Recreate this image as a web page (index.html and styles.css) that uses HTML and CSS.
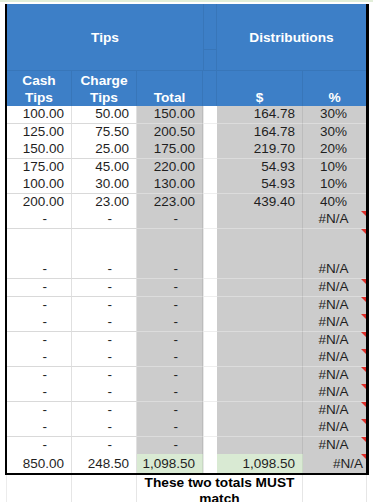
FILE: index.html
```html
<!DOCTYPE html>
<html>
<head>
<meta charset="utf-8">
<link rel="stylesheet" href="styles.css">
</head>
<body>
<div class="topstrip"></div>
<div class="frame">
  <div class="head">
    <div class="h-tips">Tips</div>
    <div class="h-gap1"></div>
    <div class="h-gap2"></div>
    <div class="h-dist">Distributions</div>
    <div class="sub sub-a">Cash<br>Tips</div>
    <div class="sub">Charge<br>Tips</div>
    <div class="sub">Total</div>
    <div class="sub sub-gap"></div>
    <div class="sub">$</div>
    <div class="sub sub-last">%</div>
  </div>

  <div class="row"><div class="c w">100.00</div><div class="c w">50.00</div><div class="c g">150.00</div><div class="c gap"></div><div class="c g">164.78</div><div class="c g pct">30%</div></div>
  <div class="row"><div class="c w">125.00</div><div class="c w">75.50</div><div class="c g">200.50</div><div class="c gap"></div><div class="c g">164.78</div><div class="c g pct">30%</div></div>
  <div class="row"><div class="c w">150.00</div><div class="c w">25.00</div><div class="c g">175.00</div><div class="c gap"></div><div class="c g">219.70</div><div class="c g pct">20%</div></div>
  <div class="row"><div class="c w">175.00</div><div class="c w">45.00</div><div class="c g">220.00</div><div class="c gap"></div><div class="c g">54.93</div><div class="c g pct">10%</div></div>
  <div class="row"><div class="c w">100.00</div><div class="c w">30.00</div><div class="c g">130.00</div><div class="c gap"></div><div class="c g">54.93</div><div class="c g pct">10%</div></div>
  <div class="row"><div class="c w">200.00</div><div class="c w">23.00</div><div class="c g">223.00</div><div class="c gap"></div><div class="c g">439.40</div><div class="c g pct">40%</div></div>
  <div class="row"><div class="c w dash">-</div><div class="c w dash">-</div><div class="c g dash">-</div><div class="c gap"></div><div class="c g"></div><div class="c g pct err">#N/A</div></div>
  <div class="row tall"><div class="c w dash">-</div><div class="c w dash">-</div><div class="c g dash">-</div><div class="c gap"></div><div class="c g"></div><div class="c g pct err">#N/A</div></div>
  <div class="row"><div class="c w dash">-</div><div class="c w dash">-</div><div class="c g dash">-</div><div class="c gap"></div><div class="c g"></div><div class="c g pct err">#N/A</div></div>
  <div class="row"><div class="c w dash">-</div><div class="c w dash">-</div><div class="c g dash">-</div><div class="c gap"></div><div class="c g"></div><div class="c g pct err">#N/A</div></div>
  <div class="row"><div class="c w dash">-</div><div class="c w dash">-</div><div class="c g dash">-</div><div class="c gap"></div><div class="c g"></div><div class="c g pct err">#N/A</div></div>
  <div class="row"><div class="c w dash">-</div><div class="c w dash">-</div><div class="c g dash">-</div><div class="c gap"></div><div class="c g"></div><div class="c g pct err">#N/A</div></div>
  <div class="row"><div class="c w dash">-</div><div class="c w dash">-</div><div class="c g dash">-</div><div class="c gap"></div><div class="c g"></div><div class="c g pct err">#N/A</div></div>
  <div class="row"><div class="c w dash">-</div><div class="c w dash">-</div><div class="c g dash">-</div><div class="c gap"></div><div class="c g"></div><div class="c g pct err">#N/A</div></div>
  <div class="row"><div class="c w dash">-</div><div class="c w dash">-</div><div class="c g dash">-</div><div class="c gap"></div><div class="c g"></div><div class="c g pct err">#N/A</div></div>
  <div class="row"><div class="c w dash">-</div><div class="c w dash">-</div><div class="c g dash">-</div><div class="c gap"></div><div class="c g"></div><div class="c g pct err">#N/A</div></div>
  <div class="row"><div class="c w dash">-</div><div class="c w dash">-</div><div class="c g dash">-</div><div class="c gap"></div><div class="c g"></div><div class="c g pct err">#N/A</div></div>
  <div class="row"><div class="c w dash">-</div><div class="c w dash">-</div><div class="c g dash">-</div><div class="c gap"></div><div class="c g"></div><div class="c g pct err">#N/A</div></div>
  <div class="row total"><div class="c w">850.00</div><div class="c w">248.50</div><div class="c gr">1,098.50</div><div class="c gap"></div><div class="c gr">1,098.50</div><div class="c g err tot-pct">#N/A</div></div>
</div>
<div class="below">
  <div class="b-cell b-first"></div>
  <div class="b-cell"></div>
  <div class="b-cell"></div>
  <div class="b-cell note">These two totals MUST match</div>
  <div class="b-cell"></div>
</div>
</body>
</html>
```

FILE: styles.css
```css
html, body {
  margin: 0;
  padding: 0;
  background: #ffffff;
  overflow: hidden;
}

body {
  width: 373px;
  height: 502px;
  font-family: "Liberation Sans", Arial, sans-serif;
  font-size: 13.5px;
  color: #1f1f1f;
}

.topstrip {
  height: 2px;
  border-bottom: 2px solid #ffffff;
  background: #e2eed9;
}

.frame {
  margin-left: 5px;
  width: 359px;
  border-left: 2px solid #000;
  border-right: 3px solid #000;
  border-bottom: 2px solid #000;
}

.head {
  display: grid;
  grid-template-columns: 65px 65px 66px 14px 86px 63px;
  grid-template-rows: 46px 21px 35px;
  background: #3d7fc7;
  color: #ffffff;
  font-weight: bold;
  font-size: 13.7px;
}

.h-tips {
  grid-column: 1 / 4;
  grid-row: 1 / 3;
  display: flex;
  align-items: center;
  justify-content: center;
  padding-top: 1px;
  border-bottom: 1px solid rgba(0, 0, 0, 0.07);
}

.h-gap1 {
  grid-column: 4;
  grid-row: 1;
  border-left: 1px solid rgba(0, 0, 0, 0.07);
  border-right: 1px solid rgba(0, 0, 0, 0.07);
  border-bottom: 1px solid rgba(0, 0, 0, 0.07);
}

.h-gap2 {
  grid-column: 4;
  grid-row: 2;
  border-left: 1px solid rgba(0, 0, 0, 0.07);
  border-right: 1px solid rgba(0, 0, 0, 0.07);
  border-bottom: 1px solid rgba(0, 0, 0, 0.07);
}

.h-dist {
  grid-column: 5 / 7;
  grid-row: 1 / 3;
  display: flex;
  align-items: center;
  justify-content: center;
  padding-top: 1px;
  border-bottom: 1px solid rgba(0, 0, 0, 0.07);
}

.sub {
  grid-row: 3;
  display: flex;
  align-items: flex-end;
  justify-content: center;
  text-align: center;
  line-height: 16.5px;
  border-right: 1px solid rgba(0, 0, 0, 0.07);
}

.sub-last {
  border-right: 0;
}

.row {
  display: grid;
  grid-template-columns: 65px 65px 66px 14px 86px 63px;
  height: 17px;
}

.row:nth-child(even) {
  height: 18px;
}

.row.tall {
  height: 50px;
}

.row.total {
  height: 19px;
}

.c {
  box-sizing: border-box;
  display: flex;
  align-items: flex-end;
  justify-content: flex-end;
  padding: 0 7px 1px 0;
  line-height: 16px;
  white-space: nowrap;
  position: relative;
  border-right: 1px solid #e0e0e0;
  border-bottom: 1px solid #d9d9d9;
}

.c.w {
  background: #ffffff;
}

.c.g {
  background: #cccccc;
  border-bottom-color: #dcdcdc;
  border-right-color: #bcbcbc;
}

.c.gr {
  background: #d9ead3;
  border-right-color: #c9d9c4;
  border-bottom-color: #d9ead3;
}

.c.gap {
  background: #ffffff;
  border-right: 0;
  border-left: 1px solid #e8e8e8;
  border-bottom-color: #eeeeee;
}

.c.pct {
  justify-content: center;
  padding-right: 2px;
  border-right: 0;
}

.c.tot-pct {
  justify-content: flex-end;
  padding-right: 3px;
  border-right: 0;
}

.c.dash {
  padding-right: 24px;
}

.row.total .c {
  border-bottom: 0;
}

.err::after {
  content: "";
  position: absolute;
  top: 0;
  right: 0;
  width: 0;
  height: 0;
  border-top: 5px solid #dd2f2a;
  border-left: 5px solid transparent;
}

.below {
  display: grid;
  grid-template-columns: 7px 65px 65px 166px 64px 6px;
  height: 40px;
}

.b-cell {
  box-sizing: border-box;
  border-right: 1px solid #e6e6e6;
}

.b-first {
  border-right: 1px solid #ececec;
}

.note {
  font-weight: bold;
  font-size: 13.7px;
  line-height: 16px;
  text-align: center;
  padding: 0 6px;
  color: #000;
}
```
